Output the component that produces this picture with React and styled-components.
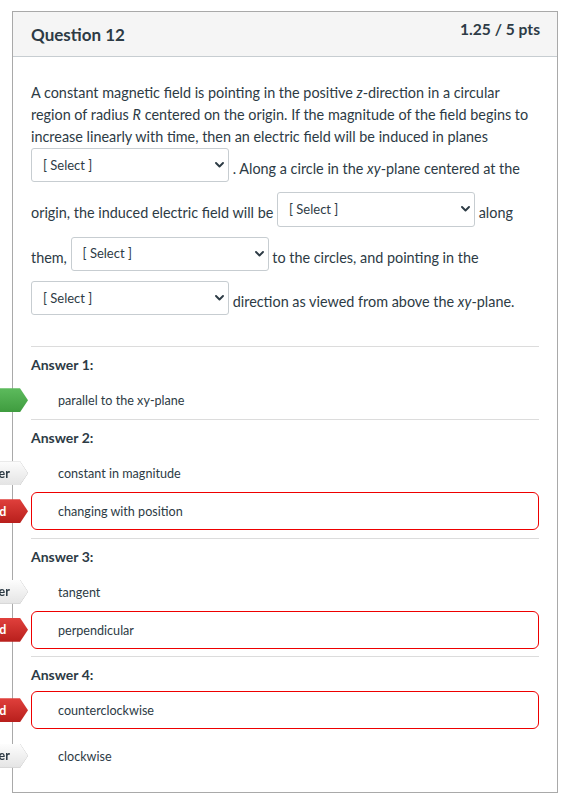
import React from "react";
import styled, { createGlobalStyle, css } from "styled-components";

const GlobalStyle = createGlobalStyle`
  html, body { margin: 0; padding: 0; background: #ffffff; }
  body { font-family: Lato, "Open Sans", Arial, sans-serif; color: #2d3b45; }
  * { box-sizing: border-box; }
`;

const Page = styled.div`
  padding: 11px 0 9px 12px;
  overflow: hidden;
`;

const Card = styled.div`
  width: 546px;
  border: 1px solid #a9a9a9;
  background: #fff;
`;

const Header = styled.div`
  height: 45px;
  background: #f5f5f5;
  border-bottom: 1px solid #c7cdd1;
  display: flex;
  justify-content: space-between;
  align-items: flex-start;
  padding: 11px 17px 0 18px;
`;

const Title = styled.h2`
  margin: 0;
  font-size: 17px;
  line-height: 24px;
  font-weight: 700;
  color: #2d3b45;
`;

const Points = styled.div`
  margin-top: -3px;
  font-size: 15.6px;
  line-height: 18px;
  font-weight: 700;
  color: #2d3b45;
`;

const Body = styled.div`
  padding: 25px 18px 17px 18px;
`;

const QuestionText = styled.p`
  margin: 0 0 21px;
  font-size: 14.4px;
  line-height: 22px;
  color: #2d3b45;
`;

const SelectWrap = styled.span`
  position: relative;
  display: inline-block;
  vertical-align: middle;
  width: 198px;
  height: 34.3px;
  margin-bottom: 10px;
`;

const Select = styled.select`
  appearance: none;
  -webkit-appearance: none;
  width: 100%;
  height: 100%;
  border: 1px solid #c7cdd1;
  border-radius: 3px;
  background: #fff;
  font-family: Lato, Arial, sans-serif;
  font-size: 13px;
  color: #2d3b45;
  padding: 0 20px 1px 11px;
  margin: 0;
  outline: none;
`;

const Chevron = styled.svg`
  position: absolute;
  right: 5px;
  top: 50%;
  margin-top: -3px;
  width: 9px;
  height: 6px;
  pointer-events: none;
`;

const Group = styled.div`
  border-top: 1px solid #dcdcdc;
  padding-top: 8px;
`;

const GroupTitle = styled.div`
  font-size: 14px;
  line-height: 20px;
  font-weight: 700;
  color: #2d3b45;
  margin-bottom: 6px;
`;

const Row = styled.div`
  position: relative;
  height: 38px;
  display: flex;
  align-items: center;
  padding: 1px 0 0 26px;
  border: 1px solid transparent;
  border-radius: 6px;
  font-size: 12.6px;
  color: #2d3b45;
  ${(p) =>
    p.$selected &&
    css`
      border-color: #ee0000;
      margin-bottom: 7.5px;
    `}
`;

const badgeColors = {
  correct: css`
    background: linear-gradient(#5dbb5d, #3f9c3f);
    color: #fff;
  `,
  wrong: css`
    background: linear-gradient(#e0403c, #b81f1c);
    color: #fff;
  `,
  answer: css`
    background: linear-gradient(#fdfdfd, #e4e4e4);
    color: #2d3b45;
  `,
};

const BadgeWrap = styled.div`
  position: absolute;
  right: calc(100% + 4px);
  top: 50%;
  margin-top: -12px;
  height: 24px;
  width: 112px;
  filter: ${(p) =>
    p.$kind === "answer" ? "drop-shadow(0 0 0.6px #9a9a9a)" : "none"};
`;

const BadgeShape = styled.div`
  width: 100%;
  height: 100%;
  clip-path: polygon(0 0, calc(100% - 8px) 0, 100% 50%, calc(100% - 8px) 100%, 0 100%);
  display: flex;
  align-items: center;
  justify-content: center;
  padding-right: 11px;
  font-size: 12.5px;
  font-weight: 700;
  white-space: nowrap;
  ${(p) => badgeColors[p.$kind]}
`;

const labels = {
  correct: "Correct!",
  wrong: "You Answered",
  answer: "Correct Answer",
};

function Badge({ kind }) {
  return (
    <BadgeWrap $kind={kind}>
      <BadgeShape $kind={kind}>{labels[kind]}</BadgeShape>
    </BadgeWrap>
  );
}

function Dropdown() {
  return (
    <SelectWrap>
      <Select defaultValue="">
        <option value="">[ Select ]</option>
      </Select>
      <Chevron viewBox="0 0 9 6">
        <path d="M1 1l3.5 3.5L8 1" fill="none" stroke="#2d3b45" strokeWidth="1.9" strokeLinecap="round" strokeLinejoin="round" />
      </Chevron>
    </SelectWrap>
  );
}

const groups = [
  { title: "Answer 1:", rows: [{ text: "parallel to the xy-plane", badge: "correct" }] },
  {
    title: "Answer 2:",
    rows: [
      { text: "constant in magnitude", badge: "answer" },
      { text: "changing with position", badge: "wrong", selected: true },
    ],
  },
  {
    title: "Answer 3:",
    rows: [
      { text: "tangent", badge: "answer" },
      { text: "perpendicular", badge: "wrong", selected: true },
    ],
  },
  {
    title: "Answer 4:",
    rows: [
      { text: "counterclockwise", badge: "wrong", selected: true },
      { text: "clockwise", badge: "answer" },
    ],
  },
];

export default function App() {
  return (
    <>
      <GlobalStyle />
      <Page>
        <Card>
          <Header>
            <Title>Question 12</Title>
            <Points>1.25 / 5 pts</Points>
          </Header>
          <Body>
            <QuestionText>
              A constant magnetic field is pointing in the positive <em>z</em>-direction in a circular
              region of radius <em>R</em> centered on the origin. If the magnitude of the field begins to
              increase linearly with time, then an electric field will be induced in planes{" "}
              <Dropdown /> . Along a circle in the <em>xy</em>-plane centered at the origin, the induced
              electric field will be <Dropdown /> along them, <Dropdown /> to the circles, and pointing in
              the <Dropdown /> direction as viewed from above the <em>xy</em>-plane.
            </QuestionText>
            {groups.map((g) => (
              <Group key={g.title}>
                <GroupTitle>{g.title}</GroupTitle>
                {g.rows.map((r) => (
                  <Row key={r.text} $selected={r.selected}>
                    <Badge kind={r.badge} />
                    {r.text}
                  </Row>
                ))}
              </Group>
            ))}
          </Body>
        </Card>
      </Page>
    </>
  );
}
